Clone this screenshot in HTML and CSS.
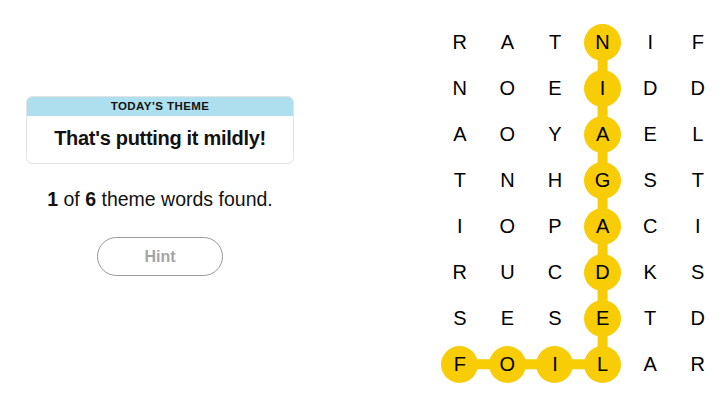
FILE: index.html
```html
<!DOCTYPE html>
<html>
<head>
<meta charset="utf-8">
<link rel="stylesheet" href="styles.css">
</head>
<body>
<div class="page">
  <section class="side">
    <div class="theme-card">
      <div class="theme-head">TODAY’S THEME</div>
      <div class="theme-body">That's putting it mildly!</div>
    </div>
    <p class="progress"><b>1</b> of <b>6</b> theme words found.</p>
    <button class="hint">Hint</button>
  </section>
  <section class="board">
    <svg class="links" width="286" height="368" viewBox="0 0 286 368">
      <path d="M166.6 23 L166.6 344.3 L23.8 344.3" fill="none" stroke="#f8cd05" stroke-width="10"/>
    </svg>
    <div class="grid">
      <span class="cell">R</span><span class="cell">A</span><span class="cell">T</span><span class="cell on">N</span><span class="cell">I</span><span class="cell">F</span>
      <span class="cell">N</span><span class="cell">O</span><span class="cell">E</span><span class="cell on">I</span><span class="cell">D</span><span class="cell">D</span>
      <span class="cell">A</span><span class="cell">O</span><span class="cell">Y</span><span class="cell on">A</span><span class="cell">E</span><span class="cell">L</span>
      <span class="cell">T</span><span class="cell">N</span><span class="cell">H</span><span class="cell on">G</span><span class="cell">S</span><span class="cell">T</span>
      <span class="cell">I</span><span class="cell">O</span><span class="cell">P</span><span class="cell on">A</span><span class="cell">C</span><span class="cell">I</span>
      <span class="cell">R</span><span class="cell">U</span><span class="cell">C</span><span class="cell on">D</span><span class="cell">K</span><span class="cell">S</span>
      <span class="cell">S</span><span class="cell">E</span><span class="cell">S</span><span class="cell on">E</span><span class="cell">T</span><span class="cell">D</span>
      <span class="cell on">F</span><span class="cell on">O</span><span class="cell on">I</span><span class="cell on">L</span><span class="cell">A</span><span class="cell">R</span>
    </div>
  </section>
</div>
</body>
</html>
```

FILE: styles.css
```css
html, body {
  margin: 0;
  padding: 0;
  background: #ffffff;
}
body {
  font-family: "Liberation Sans", Arial, sans-serif;
  color: #121212;
  width: 728px;
  height: 409px;
  overflow: hidden;
}
.page {
  display: flex;
  align-items: flex-start;
}
.side {
  width: 268px;
  margin-left: 26px;
  padding-top: 96px;
  display: flex;
  flex-direction: column;
  align-items: center;
}
.theme-card {
  width: 268px;
  box-sizing: border-box;
  border: 1px solid #e3e3e3;
  border-radius: 6px;
  overflow: hidden;
}
.theme-head {
  background: #aedfee;
  height: 19px;
  line-height: 19px;
  text-align: center;
  font-size: 11.5px;
  font-weight: 700;
  letter-spacing: 0.4px;
  color: #121212;
}
.theme-body {
  height: 47px;
  line-height: 45px;
  text-align: center;
  font-size: 20px;
  font-weight: 700;
  letter-spacing: -0.3px;
}
.progress {
  margin: 23px 0 0;
  font-size: 19.5px;
  line-height: 24px;
  color: #121212;
}
.hint {
  margin-top: 26px;
  width: 126px;
  height: 39px;
  border: 1.5px solid #9a9a9a;
  border-radius: 20px;
  background: #fff;
  color: #a5a5a5;
  font-family: "Liberation Sans", Arial, sans-serif;
  font-weight: 700;
  font-size: 16px;
}
.board {
  position: relative;
  margin-left: 142px;
  margin-top: 20px;
}
.links {
  position: absolute;
  left: 0;
  top: 0;
}
.grid {
  position: relative;
  display: grid;
  grid-template-columns: repeat(6, 47.6px);
  grid-auto-rows: 45.9px;
}
.cell {
  display: flex;
  align-items: center;
  justify-content: center;
  font-size: 20px;
  color: #000;
  justify-self: center;
  align-self: center;
  width: 37px;
  height: 37px;
  border-radius: 50%;
}
.cell.on {
  background: #f8cd05;
}
```
